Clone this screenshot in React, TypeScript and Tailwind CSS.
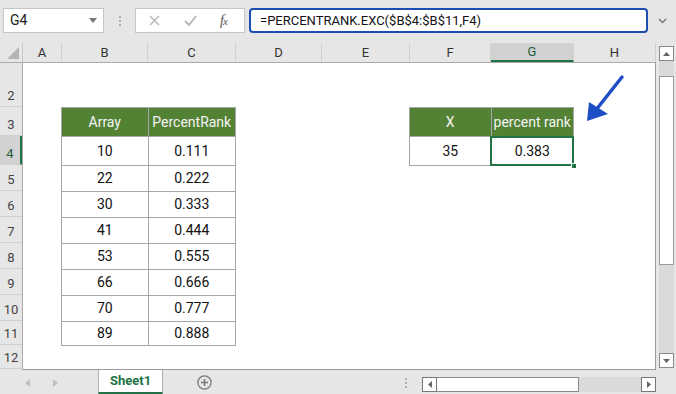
import React from 'react';

const columns = [
  { label: 'A', w: 'w-[39px]' },
  { label: 'B', w: 'w-[86px]' },
  { label: 'C', w: 'w-[88px]' },
  { label: 'D', w: 'w-[86px]' },
  { label: 'E', w: 'w-[88px]' },
  { label: 'F', w: 'w-[81px]' },
  { label: 'G', w: 'w-[83px]', active: true },
  { label: 'H', w: 'w-[82px]' },
];

const rows = [
  { n: 2, h: 'h-[44px]' },
  { n: 3, h: 'h-[29px]' },
  { n: 4, h: 'h-[29px]', active: true },
  { n: 5, h: 'h-[26px]' },
  { n: 6, h: 'h-[26px]' },
  { n: 7, h: 'h-[26px]' },
  { n: 8, h: 'h-[26px]' },
  { n: 9, h: 'h-[26px]' },
  { n: 10, h: 'h-[26px]' },
  { n: 11, h: 'h-[24px]' },
  { n: 12, h: 'h-[24px]' },
];

const arrayData = [
  ['10', '0.111'],
  ['22', '0.222'],
  ['30', '0.333'],
  ['41', '0.444'],
  ['53', '0.555'],
  ['66', '0.666'],
  ['70', '0.777'],
  ['89', '0.888'],
];
const dataHeights = ['h-[29px]', 'h-[26px]', 'h-[26px]', 'h-[26px]', 'h-[26px]', 'h-[26px]', 'h-[26px]', 'h-[24px]'];

function Toolbar() {
  return (
    <div className="h-[43px] flex items-start pt-[8px] pl-[3px] bg-[#e6e6e6]">
      {/* Name box */}
      <div className="w-[101px] h-[25px] bg-white border border-[#c6c6c6] flex items-center justify-between pl-[6px] pr-[6px]">
        <span className="text-[14px] text-[#222]">G4</span>
        <svg width="8" height="5" viewBox="0 0 8 5"><path d="M0 0h8L4 5z" fill="#777" /></svg>
      </div>
      <div className="w-[31px] h-[25px] flex flex-col items-center justify-center gap-[2px]">
        <span className="w-[2px] h-[2px] bg-[#b0b0b0]" />
        <span className="w-[2px] h-[2px] bg-[#b0b0b0]" />
        <span className="w-[2px] h-[2px] bg-[#b0b0b0]" />
      </div>
      {/* Cancel / enter / fx */}
      <div className="w-[110px] h-[25px] bg-white border border-[#c6c6c6] flex items-center">
        <svg className="ml-[13px]" width="11" height="11" viewBox="0 0 11 11">
          <path d="M1 1l9 9M10 1l-9 9" stroke="#b4b4b4" strokeWidth="1.4" />
        </svg>
        <svg className="ml-[24px]" width="13" height="11" viewBox="0 0 13 11">
          <path d="M1 6l4 4 7-9" stroke="#b4b4b4" strokeWidth="1.8" fill="none" />
        </svg>
        <span className="ml-[23px] text-[14px] italic text-[#555] font-['Liberation_Serif',serif] tracking-[-1px]">
          f<span className="text-[11px]">x</span>
        </span>
      </div>
      {/* Formula input */}
      <div className="ml-[4px] w-[399px] h-[25px] border-2 border-[#1d4db3] rounded-[4px] bg-white flex items-center pl-[9px]">
        <span className="text-[13px] text-[#111]">=PERCENTRANK.EXC($B$4:$B$11,F4)</span>
      </div>
      <div className="w-[28px] h-[25px] flex items-center justify-center">
        <svg width="9" height="6" viewBox="0 0 9 6"><path d="M1 1l3.5 3.5L8 1" stroke="#777" strokeWidth="1.5" fill="none" /></svg>
      </div>
    </div>
  );
}

function ColumnHeaders() {
  return (
    <div className="h-[20px] flex bg-[#e6e6e6] border-b border-[#ababab]">
      <div className="w-[23px] h-full border-r border-[#c8c8c8] flex items-end justify-end p-[3px]">
        <svg width="12" height="12" viewBox="0 0 12 12"><path d="M12 0v12H0z" fill="#b4b4b4" /></svg>
      </div>
      {columns.map((c) => (
        <div
          key={c.label}
          className={`${c.w} h-full border-r border-[#d0d0d0] flex items-center justify-center text-[13px] ${
            c.active ? 'bg-[#d2d2d2] text-[#1f5c3a] border-b-2 border-b-[#217346]' : 'text-[#333]'
          }`}
        >
          {c.label}
        </div>
      ))}
    </div>
  );
}

function RowHeaders() {
  return (
    <div className="w-[23px] flex flex-col bg-[#e6e6e6] border-r border-[#ababab]">
      {rows.map((r) => (
        <div
          key={r.n}
          className={`${r.h} border-b border-[#d0d0d0] flex items-end justify-center pb-[1px] text-[13px] ${
            r.active ? 'bg-[#d2d2d2] text-[#1f5c3a] border-r-2 border-r-[#217346]' : 'text-[#444]'
          }`}
        >
          {r.n}
        </div>
      ))}
    </div>
  );
}

function Cell({ children, h, header, w }: { children: React.ReactNode; h: string; header?: boolean; w: string }) {
  return (
    <div
      className={`${w} ${h} border-r border-b border-[#a6a6a6] flex items-center justify-center text-[14px] ${
        header ? 'bg-[#548235] text-[#f4f4f4]' : 'bg-white text-[#111]'
      }`}
    >
      {children}
    </div>
  );
}

function Sheet() {
  return (
    <div className="relative w-[633px] grid grid-cols-[39px_86px_88px_86px_88px_81px_83px_82px] grid-rows-[44px_29px_29px_26px_26px_26px_26px_26px_26px_24px_24px] bg-white border-r border-b border-[#9a9a9a]">
      {/* Array table */}
      <div className="col-start-2 col-span-2 row-start-2 row-span-9 self-start flex flex-col border-l border-t border-[#a6a6a6] -ml-px">
        <div className="flex">
          <Cell h="h-[29px]" w="w-[87px]" header>Array</Cell>
          <Cell h="h-[29px]" w="w-[88px]" header>PercentRank</Cell>
        </div>
        {arrayData.map((d, i) => (
          <div className="flex" key={d[0]}>
            <Cell h={dataHeights[i]} w="w-[87px]">{d[0]}</Cell>
            <Cell h={dataHeights[i]} w="w-[88px]">{d[1]}</Cell>
          </div>
        ))}
      </div>

      {/* X / percent rank table */}
      <div className="col-start-6 col-span-2 row-start-2 row-span-2 self-start flex flex-col border-l border-t border-[#a6a6a6] -ml-px">
        <div className="flex">
          <Cell h="h-[29px]" w="w-[82px]" header>X</Cell>
          <Cell h="h-[29px]" w="w-[83px]" header>percent rank</Cell>
        </div>
        <div className="flex">
          <Cell h="h-[29px]" w="w-[82px]">35</Cell>
          <div className="relative w-[83px] h-[29px] border-r border-b border-[#a6a6a6] flex items-center justify-center text-[14px] text-[#111] bg-white">
            0.383
            <div className="absolute -left-[2px] -top-px -right-px -bottom-px border-2 border-[#217346]" />
            <div className="absolute -right-[4px] -bottom-[4px] w-[6px] h-[6px] bg-[#217346] border border-white" />
          </div>
        </div>
      </div>

      {/* Annotation arrow */}
      <svg className="absolute left-[560px] top-[8px]" width="46" height="56" viewBox="0 0 46 56">
        <path d="M39 6L9 44" stroke="#1f4fc4" strokeWidth="3.5" strokeLinecap="round" />
        <path d="M4 50L6 31L25 43z" fill="#1f4fc4" />
      </svg>
    </div>
  );
}

function VerticalScroll() {
  return (
    <div className="w-[20px] h-[326px] bg-[#e6e6e6] flex flex-col items-center pt-[3px] pl-[1px]">
      <div className="w-[15px] h-[15px] bg-white border border-[#8a8a8a] flex items-center justify-center">
        <svg width="7" height="4" viewBox="0 0 7 4"><path d="M0 4h7L3.5 0z" fill="#666" /></svg>
      </div>
      <div className="w-[15px] flex-1 bg-[#dadada] flex flex-col pt-[15px]">
        <div className="w-[15px] h-[189px] bg-white border border-[#9a9a9a]" />
      </div>
      <div className="w-[15px] h-[15px] bg-white border border-[#8a8a8a] flex items-center justify-center mb-px">
        <svg width="7" height="4" viewBox="0 0 7 4"><path d="M0 0h7L3.5 4z" fill="#666" /></svg>
      </div>
    </div>
  );
}

function TabBar() {
  return (
    <div className="h-[25px] flex items-stretch bg-[#e6e6e6]">
      <div className="w-[98px] flex items-center">
        <svg className="ml-[25px]" width="5" height="8" viewBox="0 0 5 8"><path d="M5 0v8L0 4z" fill="#c0c0c0" /></svg>
        <svg className="ml-[23px]" width="5" height="8" viewBox="0 0 5 8"><path d="M0 0v8l5-4z" fill="#c0c0c0" /></svg>
      </div>
      <div className="w-[65px] bg-white border-l border-r border-[#b0b0b0] border-b-[3px] border-b-[#217346] flex items-center justify-center -mt-px">
        <span className="text-[13px] font-bold text-[#217346]">Sheet1</span>
      </div>
      <div className="w-[34px]" />
      <div className="flex items-center">
        <svg width="15" height="15" viewBox="0 0 15 15">
          <circle cx="7.5" cy="7.5" r="6.6" stroke="#7a7a7a" strokeWidth="1.3" fill="none" />
          <path d="M7.5 4v7M4 7.5h7" stroke="#7a7a7a" strokeWidth="1.5" />
        </svg>
      </div>
      <div className="w-[210px] flex items-center justify-end pr-[15px]">
        <div className="flex flex-col gap-[2px]">
          <span className="w-[2px] h-[2px] bg-[#b0b0b0]" />
          <span className="w-[2px] h-[2px] bg-[#b0b0b0]" />
          <span className="w-[2px] h-[2px] bg-[#b0b0b0]" />
        </div>
      </div>
      <div className="pt-[7px]">
        <div className="w-[234px] h-[15px] flex bg-[#dadada]">
          <div className="w-[15px] h-[15px] bg-white border border-[#777] flex items-center justify-center">
            <svg width="4" height="7" viewBox="0 0 4 7"><path d="M4 0v7L0 3.5z" fill="#666" /></svg>
          </div>
          <div className="w-[142px] h-[15px] bg-white border border-[#8a8a8a] border-l-0" />
          <div className="flex-1" />
          <div className="w-[15px] h-[15px] bg-white border border-[#777] flex items-center justify-center">
            <svg width="4" height="7" viewBox="0 0 4 7"><path d="M0 0v7l4-3.5z" fill="#666" /></svg>
          </div>
        </div>
      </div>
    </div>
  );
}

export default function App() {
  return (
    <div className="w-[676px] h-[394px] overflow-hidden bg-[#e6e6e6] font-['Roboto',sans-serif]">
      <Toolbar />
      <div className="flex">
        <div className="w-[656px] flex flex-col">
          <ColumnHeaders />
          <div className="flex">
            <RowHeaders />
            <Sheet />
          </div>
        </div>
        <VerticalScroll />
      </div>
      <TabBar />
    </div>
  );
}
